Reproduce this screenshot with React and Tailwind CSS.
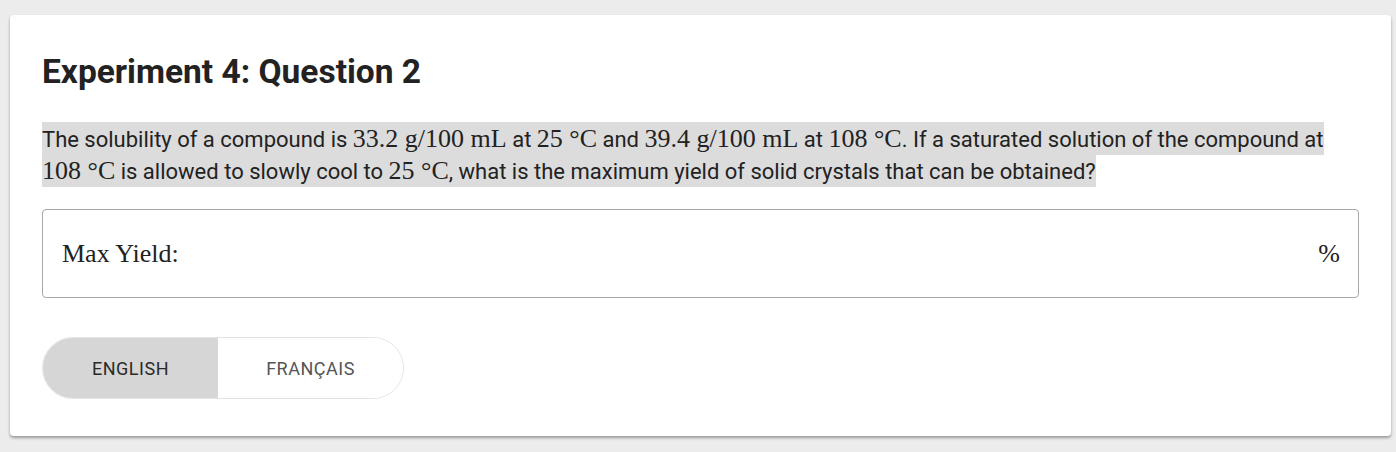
import React, { useState } from 'react';

const M = ({ children }) => (
  <span className="font-['Liberation_Serif',serif] text-[26px] leading-none">{children}</span>
);

const App = () => {
  const [lang, setLang] = useState('en');

  return (
    <div className="min-h-screen bg-[#ececec] pl-[10px] pr-[5px] pt-[15px] pb-4 font-['Roboto',sans-serif]">
      <div className="bg-white rounded shadow-[0_2px_3px_rgba(0,0,0,0.35)] px-8 pt-[37px] pb-[37px]">
        <h1 className="text-[33.5px] leading-[40px] font-bold text-[#222]">Experiment 4: Question 2</h1>

        {/* Enunciado */}
        <p className="mt-[32px] text-[22px] leading-[32px] text-[#222]">
          <span className="bg-[#dcdcdc] box-decoration-clone pt-[5px] pb-[3px]">
            The solubility of a compound is <M>33.2 g/100 mL</M> at <M>25 °C</M> and <M>39.4 g/100 mL</M> at{' '}
            <M>108 °C</M>. If a saturated solution of the compound at <M>108 °C</M> is allowed to slowly cool to{' '}
            <M>25 °C</M>, what is the maximum yield of solid crystals that can be obtained?
          </span>
        </p>

        <div className="mt-[21px] h-[89px] border border-[#a8a8a8] rounded flex items-center justify-between pl-[19px] pr-[18px]">
          <span className="font-['Liberation_Serif',serif] text-[26px] text-[#222]">Max Yield:</span>
          <span className="font-['Liberation_Serif',serif] text-[26px] text-[#222]">%</span>
        </div>

        <div className="mt-[39px] inline-flex h-[62px] rounded-full border border-[#e2e2e2] overflow-hidden">
          <button
            type="button"
            onClick={() => setLang('en')}
            className={`w-[175px] text-[18px] tracking-[0.5px] uppercase ${lang === 'en' ? 'bg-[#d6d6d6] text-[#2a2a2a]' : 'bg-white text-[#555]'}`}
          >
            English
          </button>
          <button
            type="button"
            onClick={() => setLang('fr')}
            className={`w-[185px] text-[18px] tracking-[0.5px] uppercase ${lang === 'fr' ? 'bg-[#d6d6d6] text-[#2a2a2a]' : 'bg-white text-[#555]'}`}
          >
            Français
          </button>
        </div>
      </div>
    </div>
  );
};

export default App;
